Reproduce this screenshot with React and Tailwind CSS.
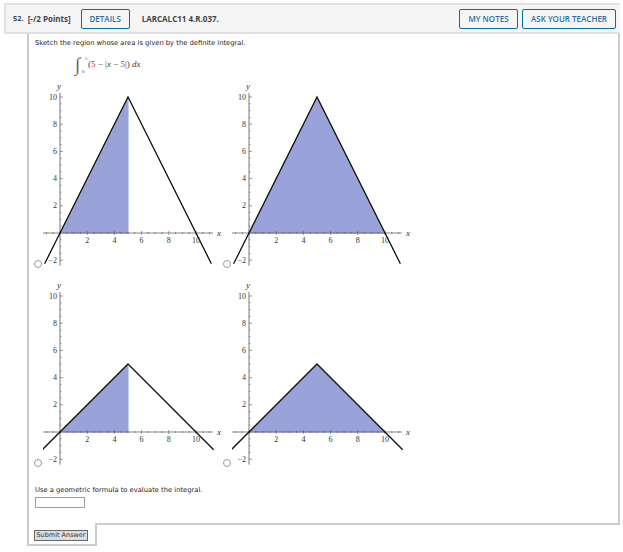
import React from 'react';

const SCALE = 13.6;
const OX = 17;
const OY = 152;
const px = (x) => OX + x * SCALE;
const py = (y) => OY - y * SCALE;

function Graph({ peak, fullFill }) {
  // curve is peak - (peak / 5) * |x - 5|
  const slope = peak / 5;
  const lowX = peak === 10 ? -1.13 : -1.3;
  const highX = 10 - lowX;
  const lowY = slope * lowX;
  const minor = [];
  for (let i = -2; i <= 22; i++) minor.push(i / 2);
  const fill = fullFill
    ? `${px(0)},${py(0)} ${px(5)},${py(peak)} ${px(10)},${py(0)}`
    : `${px(0)},${py(0)} ${px(5)},${py(peak)} ${px(5)},${py(0)}`;
  return (
    <svg width="179" height="188" viewBox="0 0 179 188" className="block shrink-0">
      <polygon points={fill} fill="#99a3da" />
      {fullFill ? (
        <line x1={px(0)} y1={py(0) + 0.5} x2={px(10)} y2={py(0) + 0.5} stroke="#c3cdf0" strokeWidth="1" />
      ) : (
        <path d={`M${px(5) + 0.5} ${py(peak) + 2}V${py(0) + 0.5}H${px(0)}`} fill="none" stroke="#c3cdf0" strokeWidth="1" />
      )}
      <line x1={px(-1.28)} y1={OY} x2={px(11.25)} y2={OY} stroke="#555" strokeWidth="0.7" />
      <line x1={OX} y1={py(10.3)} x2={OX} y2={py(-2.4)} stroke="#555" strokeWidth="0.8" />
      {minor.map((v) => (
        <line key={'x' + v} x1={px(v)} y1={OY - (v % 2 === 0 ? 2 : 1)} x2={px(v)} y2={OY + (v % 2 === 0 ? 2 : 1)} stroke="#555" strokeWidth="0.6" />
      ))}
      {[-2, -1.5, -1, -0.5, 0.5, 1, 1.5, 2, 2.5, 3, 3.5, 4, 4.5, 5, 5.5, 6, 6.5, 7, 7.5, 8, 8.5, 9, 9.5, 10].map((v) => (
        <line key={'y' + v} x1={OX} y1={py(v)} x2={OX + (v % 2 === 0 ? 3 : 1.5)} y2={py(v)} stroke="#555" strokeWidth="0.6" />
      ))}
      <polyline
        points={`${px(lowX)},${py(lowY)} ${px(5)},${py(peak)} ${px(highX)},${py(lowY)}`}
        fill="none"
        stroke="#111"
        strokeWidth="1.3"
      />
      <g fontFamily="'Liberation Serif', serif" fontSize="8" fill="#333">
        {[2, 4, 6, 8, 10].map((v) => (
          <text key={v} x={px(v)} y={OY + 10} textAnchor="middle">{v}</text>
        ))}
        {[2, 4, 6, 8, 10].map((v) => (
          <text key={v} x={OX - 3} y={py(v) + 2.5} textAnchor="end">{v}</text>
        ))}
        <text x={OX - 3} y={py(-2) + 2.5} textAnchor="end">−2</text>
        <text x={OX - 1} y={8} textAnchor="middle" fontStyle="italic" fontSize="9">y</text>
        <text x={OX + 159} y={OY + 3} textAnchor="middle" fontStyle="italic" fontSize="9">x</text>
      </g>
    </svg>
  );
}

function Choice({ peak, fullFill }) {
  return (
    <label className="flex items-end">
      <input
        type="radio"
        name="region"
        className="appearance-none w-[8px] h-[8px] mb-[1px] mr-[1px] rounded-full border border-[#9a9a9a] bg-white shrink-0"
      />
      <Graph peak={peak} fullFill={fullFill} />
    </label>
  );
}

export default function App() {
  return (
    <div className="w-[623px] h-[552px] bg-white pt-[3px] overflow-hidden font-['DejaVu_Sans',sans-serif] text-[6.75px] text-[#222]">
      <div className="ml-[4px] w-[616px] h-[31px] flex items-center bg-[#f5f5f5] border-2 border-[#e0e0e0] border-r-0 font-['Open_Sans',sans-serif] font-bold">
        <span className="ml-[7px] text-[7.5px] text-[#444]">52.</span>
        <span className="ml-[4px] text-[8px] text-[#444]">[-/2 Points]</span>
        <button className="ml-[10px] w-[49px] h-[20px] rounded-[2px] border border-[#0b6aa2] text-[8px] text-[#2d6da5] font-semibold">DETAILS</button>
        <span className="ml-[12px] text-[8px] text-[#444]">LARCALC11 4.R.037.</span>
        <button className="ml-auto w-[59px] h-[20px] rounded-[2px] border border-[#0b6aa2] text-[8px] text-[#2d6da5] font-semibold">MY NOTES</button>
        <button className="ml-[4px] mr-[4px] w-[94px] h-[20px] rounded-[2px] border border-[#0b6aa2] text-[8px] text-[#2d6da5] font-semibold">ASK YOUR TEACHER</button>
      </div>

      <div className="ml-[27px] w-[593px] h-[491px] border-2 border-t-0 border-[#cccccc] pt-[4px] pl-[6px] relative z-0">
        <p className="h-[10px] leading-[10px] whitespace-nowrap">Sketch the region whose area is given by the definite integral.</p>

        <div className="h-[33px] pl-[40px] flex items-center font-['Liberation_Serif',serif] text-[9px] text-[#444]">
          <span className="w-[7px] text-[19px] leading-none font-light text-[#666]">∫</span>
          <span className="flex flex-col text-[5px] leading-[13px] w-[6px]">
            <span className="ml-[3px] text-[#d22]">5</span>
            <span>0</span>
          </span>
          <span className="whitespace-nowrap">
            (<span className="text-[#d22]">5</span> − |<i>x</i> − <span className="text-[#d22]">5</span>|) <i>dx</i>
          </span>
        </div>

        <div className="-ml-[1px] grid grid-cols-[189px_189px] gap-y-[11px]">
          <Choice peak={10} />
          <Choice peak={10} fullFill />
          <Choice peak={5} />
          <Choice peak={5} fullFill />
        </div>

        <p className="mt-[17px] h-[10px] leading-[10px] whitespace-nowrap">Use a geometric formula to evaluate the integral.</p>
        <input type="text" className="block mt-[2px] w-[50px] h-[11px] border border-[#9a9aaa] bg-white" />
      </div>

      <div className="ml-[27px] -mt-[2px] w-[70px] h-[23px] border-2 border-t-0 border-[#cccccc] bg-white relative z-10 pt-[7px] pl-[5px]">
        <button className="flex items-center justify-center w-[54px] h-[11px] p-0 bg-[#dddddd] border border-[#666] text-[6.5px] leading-[9px] text-[#333] whitespace-nowrap">Submit Answer</button>
      </div>
    </div>
  );
}
